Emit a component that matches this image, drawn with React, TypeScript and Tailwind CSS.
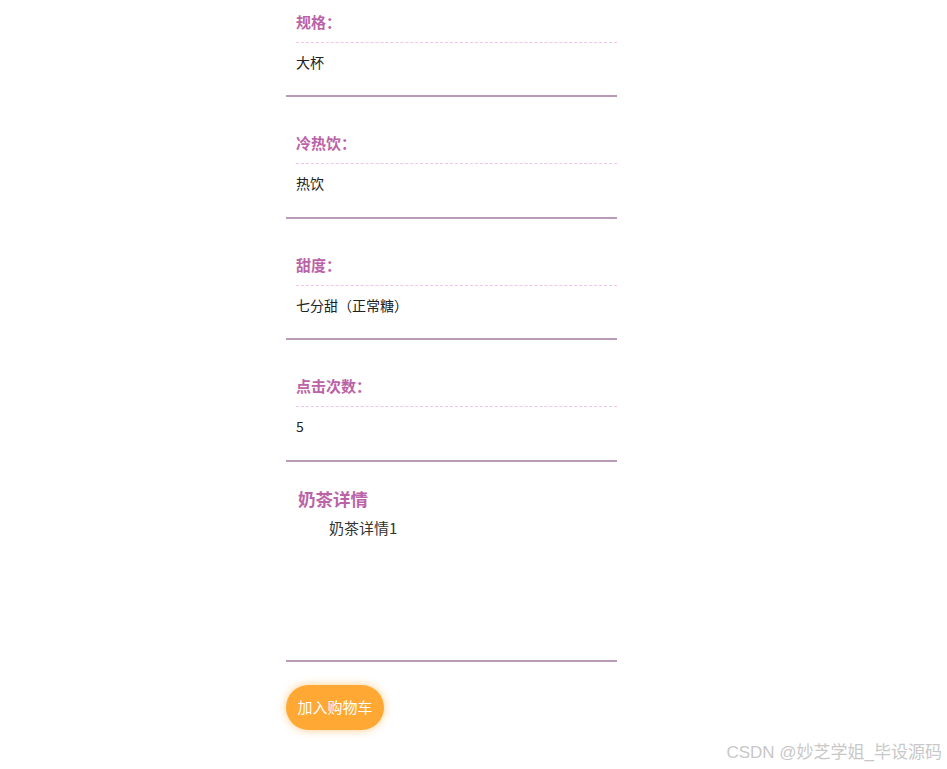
const fields = [
  { label: '规格：', value: '大杯' },
  { label: '冷热饮：', value: '热饮' },
  { label: '甜度：', value: '七分甜（正常糖）' },
  { label: '点击次数：', value: '5' },
]

const font = 'font-["Microsoft_YaHei","Noto_Sans_CJK_SC",sans-serif] [text-spacing-trim:space-all]'

export default function App() {
  return (
    <div className={`relative min-h-[769px] bg-white ${font}`}>
      <div className="ml-[286px] w-[331px]">
        {fields.map((f, i) => (
          <div
            key={f.label}
            className={`border-b-2 border-[#b99bb8] pl-[10px] ${i === 0 ? 'pt-[12px] pb-[23px]' : 'pt-[36px] pb-[23.6px]'}`}
          >
            <div className="border-b border-dashed border-[#f0c6e8] pb-[10px] text-[15px] font-bold leading-[20px] text-[#bb63a8]">
              {f.label}
            </div>
            <div className="pt-[9px] text-[14px] leading-[20px] text-[#222]">{f.value}</div>
          </div>
        ))}

        {/* ── 奶茶详情 ───────────────────────────── */}
        <div className="h-[200px] border-b-2 border-[#b99bb8] pl-[12px] pt-[26px]">
          <div className="text-[17.5px] font-bold leading-[22px] text-[#bb63a8]">奶茶详情</div>
          <p className="pl-[31px] pt-[8px] text-[15px] leading-[20px] text-[#333]">奶茶详情1</p>
        </div>

        <button className="mt-[23px] h-[45px] w-[98px] rounded-full bg-[#ffa833] text-[15px] text-white shadow-[0_0_8px_rgba(255,168,51,0.6)]">
          加入购物车
        </button>
      </div>

      <div className="absolute right-[5px] top-[742px] font-['Liberation_Sans','Noto_Sans_CJK_SC',sans-serif] text-[17px] leading-[22px] text-[#c8c8c8]">
        CSDN @妙芝学姐_毕设源码
      </div>
    </div>
  )
}
